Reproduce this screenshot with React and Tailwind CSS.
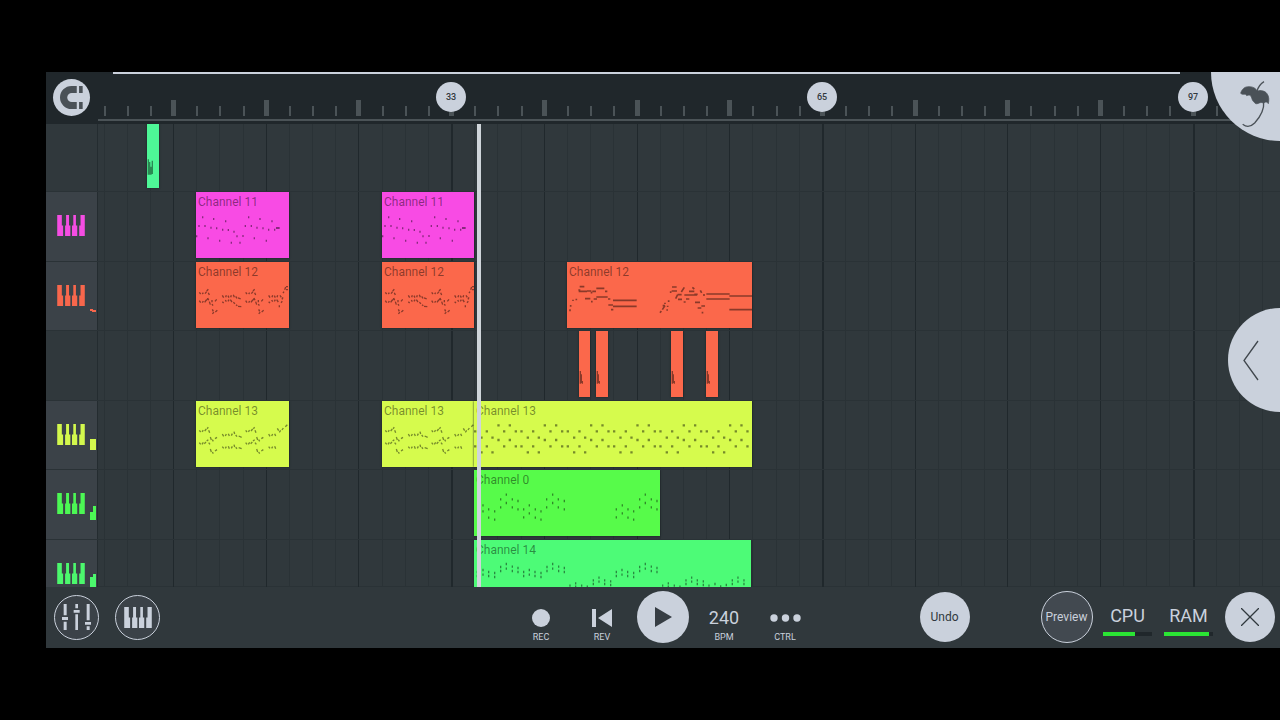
import { useState } from 'react';

// Horizontal scale of the playlist
const BAR_WIDTH = 11.586;
const SCROLL_X = 17.6;
const barX = (bar) => Math.round((bar - 1) * BAR_WIDTH - SCROLL_X);

const MARKERS = [33, 65, 97];
const GRID_BARS = Array.from({ length: 100 }, (_, i) => i * 2 + 3);

// Note previews are stored as stroke paths, three units to the pixel
const dots = (points, w = 4) => points.map(([x, y]) => `M${x} ${y}h${w}`).join('');

const repeat = (points, step, times) =>
    Array.from({ length: times }, (_, i) => points.map(([x, y]) => [x + i * step, y])).flat();

const SPARSE = dots([
    [18, 76], [51, 81], [87, 88], [7, 102], [25, 102], [43, 107], [60, 109], [78, 113], [95, 114], [112, 119],
    [121, 133], [139, 132], [34, 139], [69, 146], [104, 152], [130, 152], [156, 76], [190, 81], [226, 88],
    [146, 102], [164, 102], [181, 107], [199, 109], [216, 113], [234, 113], [173, 139], [209, 146], [0, 133],
]) + 'M240 108h11';

const PHRASE_12 =
    'M10 91l4 5M19 96l3-4M27 95l5-6M32 87l5-5M37 92l3 7M10 116l4 6M19 122l3-5M26 121l5-7M31 115l5-6M35 108l3 7M40 119l3 9M48 126l3 5M48 114v7M57 118l5-6M49 142l3 6M49 155l5-4M58 150l6-5' +
    'M79 100l4 7M89 106l2-6M96 101l3 6M104 106l2-6M79 119l4 4M88 114l3 5M96 118l3-5M103 113l5 7';
const TAIL_12 = 'M112 98l3 8M119 103l4 6M112 121l5 4M120 128l4 3M126 108l8 3M126 133l10 1';
const END_12 = 'M252 100l4 6M258 112l3-6M255 122l4-4M261 93l3-4M266 83l3-8M270 74h6M270 83h6M250 130v6';

const PHRASE_13 =
    'M10 88l4 5M18 92l4-4M26 90l5-6M33 83l4-4M38 88l3 7M10 125l4 5M18 130l4-6M25 128l5-5M32 120l5-4M38 125l4 5M43 108l3 9M49 116l3 5M57 113l6-4M43 144l3 9M49 153l3 5M57 150l6-4' +
    'M79 99l4 7M88 105l3-6M97 98l3 7M79 137l4 5M88 142l3-5M97 136l3 7';
const TAIL_13 = 'M106 104l3-6M114 92l2 7M119 102l4 5M128 105l9 4M106 142l3-6M114 131l2 7M119 139l4 4M128 140l9 3';
const END_13 = 'M244 82l4 7M250 94l4-6M258 87l4-6M268 77l6-6';

const CHORDS =
    'M9 142v6M11 129v5M18 113v4M28 110v5M34 84h6M38 74h14M35 88h25M54 110h16M60 87h13M71 92h5M76 88h11M72 119h5M80 111h10M88 79h24M88 105h34M114 88h7M123 111h7M124 129h14M132 143h7M138 133h71M138 115h71' +
    'M279 152l4-5M286 143l8-12M287 131h7M294 122v4M298 144h5M302 131v4M305 115v5M311 88v5M315 75h14M314 87h16M326 110l6-12M332 98h12M343 90l9-14M352 99h38M333 112h12M350 120h6M357 111h10M366 88h16M376 76l6 5M382 97h10M384 121h15M392 138h11M403 132h11M404 152h5M400 85l4 8M411 96v6M418 96h70M418 111h70M487 102h69M487 143h69';

const ARP = dots(
    repeat([
        [70, 73], [104, 73], [0, 91], [35, 91], [87, 91], [122, 91], [19, 110], [52, 110],
        [70, 117], [104, 117], [0, 136], [35, 136], [87, 136], [122, 136], [19, 154], [52, 154],
    ], 139, 6),
    7
);

const STEP_0 = dots([
    [25, 106], [25, 124], [42, 118], [42, 143], [60, 124], [60, 149], [78, 88], [78, 112], [95, 74], [95, 99],
    [113, 88], [113, 112], [130, 93], [130, 118], [147, 118], [147, 142], [164, 106], [164, 130], [182, 118], [182, 143],
    [199, 124], [199, 149], [216, 88], [216, 112], [234, 74], [234, 99], [251, 88], [251, 112], [269, 93], [269, 118],
    [425, 118], [425, 142], [443, 106], [443, 130], [460, 118], [460, 143], [477, 124], [477, 149], [495, 88], [495, 112],
    [512, 74], [512, 99], [530, 88], [530, 112], [547, 93], [547, 118],
], 4);

const HIGH_RUN = [
    [8, 96], [8, 108], [25, 90], [25, 104], [42, 96], [42, 108], [60, 99], [60, 111],
    [78, 81], [78, 93], [95, 72], [95, 86], [113, 80], [113, 93], [130, 84], [130, 96],
];
const LOW_RUN = [
    [286, 137], [303, 130], [303, 140], [321, 137], [338, 140], [356, 121], [356, 132],
    [373, 113], [373, 125], [390, 121], [390, 132], [408, 124], [408, 135],
];
const STEP_14 = dots([
    ...repeat(HIGH_RUN, 139, 2),
    ...HIGH_RUN.map(([x, y]) => [x + 417, y]),
    ...LOW_RUN,
    ...LOW_RUN.map(([x, y]) => [x + 278, y]),
    [703, 137], [721, 132], [738, 139], [755, 135], [773, 121], [773, 132], [790, 113], [790, 125], [808, 121], [808, 132],
], 4);

const HIT = 'M4 120v38M7 130v26M10 150v8';

const TRACKS = [
    {
        height: 'h-[67px]',
        clips: [{ start: 6.75, bars: 1, fill: 'bg-[#4ef797]', notes: 'M4 112v46M8 120v38M12 134v24M16 116v40', cut: true }],
    },
    {
        height: 'h-[70px]',
        color: 'text-[#f54de3]',
        clips: [
            { start: 11, bars: 8, name: 'Channel 11', fill: 'bg-[#f84be4]', notes: SPARSE, weight: 6 },
            { start: 27, bars: 8, name: 'Channel 11', fill: 'bg-[#f84be4]', notes: SPARSE, weight: 6 },
        ],
    },
    {
        height: 'h-[69px]',
        color: 'text-[#f8674c]',
        level: 'M0 47h3v1h3v2H2v-1H0z',
        clips: [
            { start: 11, bars: 8, name: 'Channel 12', fill: 'bg-[#fb684b]', phrase: PHRASE_12, notes: TAIL_12 + END_12 },
            { start: 27, bars: 8, name: 'Channel 12', fill: 'bg-[#fb684b]', phrase: PHRASE_12, notes: TAIL_12 + END_12 },
            { start: 43, bars: 16, name: 'Channel 12', fill: 'bg-[#fb684b]', notes: CHORDS, weight: 5 },
        ],
    },
    {
        height: 'h-[70px]',
        clips: [44, 45.5, 52, 55].map((start) => ({ start, bars: 1, fill: 'bg-[#fb684b]', notes: HIT })),
    },
    {
        height: 'h-[69px]',
        color: 'text-[#d3f84d]',
        level: 'M0 38h6v11H0z',
        clips: [
            { start: 11, bars: 8, name: 'Channel 13', fill: 'bg-[#d6fb4d]', phrase: PHRASE_13, notes: TAIL_13 + END_13 },
            { start: 27, bars: 8, name: 'Channel 13', fill: 'bg-[#d6fb4d]', phrase: PHRASE_13, notes: TAIL_13 + END_13 },
            { start: 35, bars: 24, name: 'Channel 13', fill: 'bg-[#d6fb4d]', notes: ARP, weight: 7 },
        ],
    },
    {
        height: 'h-[70px]',
        color: 'text-[#4cf854]',
        level: 'M3 36h3v14H0v-8h3z',
        clips: [{ start: 35, bars: 16, name: 'Channel 0', fill: 'bg-[#57fb4a]', notes: STEP_0, weight: 7 }],
    },
    {
        height: 'h-12',
        color: 'text-[#4cf86d]',
        level: 'M3 34h3v14H0V37h3z',
        clips: [{ start: 35, bars: 23.9, name: 'Channel 14', fill: 'bg-[#4dfb77]', notes: STEP_14, weight: 7 }],
    },
];

const PianoIcon = () => (
    <svg viewBox="0 0 84 64" className="block w-7 h-[21px]" fill="currentColor">
        <path d="M0 0h14v32h4v32H0zM27 0h9v32h4v32H24V32h3zM49 0h8v32h4v32H45V32h4zM71 0h13v64H67V32h4z" />
    </svg>
);

const MixerIcon = () => (
    <svg viewBox="0 0 87 78" className="block w-[29px] h-[26px]" fill="currentColor">
        <path d="M5 0h9v34H5zM0 39h18v9H0zM5 53h9v25H5zM40 0h8v13h-8zM35 18h18v8H35zM40 31h8v47h-8zM74 0h9v49h-9zM69 54h18v8H69zM74 67h9v11h-9z" />
    </svg>
);

const MagnetIcon = () => (
    <svg viewBox="0 0 70 70" className="block w-[23px] h-[23px]" fill="currentColor">
        <path d="M51 0H35a35 35 0 0 0 0 70h16V49H36a14 14 0 0 1 0-28h15zM58 0h11v21H58zM58 49h11v21H58z" />
    </svg>
);

const FruitIcon = () => (
    <svg viewBox="0 0 207 207" className="block size-full" fill="none" stroke="currentColor">
        <path
            fill="currentColor"
            strokeWidth="2"
            d="M89 64c3-12 12-21 25-20 12-1 21 6 25 13 9-4 24 0 29 8 7 9 6 20 4 30-3-5-8-6-13-3-3 3-7-2-11 0-6 1-13 7-17 0-7-5-8-11-10-17-2-6-9-7-14-4-2-1-1-5-5-4-3-1-8 2-13-3z"
        />
        <path strokeWidth="4" d="M137 60c4-15 12-25 22-31M158 90c2 20-9 43-27 63-10 10-23 14-36 4" />
    </svg>
);

const Clip = ({ clip }) => {
    const left = barX(clip.start);
    const width = barX(clip.start + clip.bars) - left;

    return (
        <div
            className={`absolute ${clip.cut ? 'bottom-[3px]' : 'top-0'} h-[66px] overflow-hidden shadow-[0_0_2px_#1a2024] ${clip.fill}`}
            style={{ left, width }}
        >
            <svg className="absolute inset-0 size-full" fill="none" stroke="#000" strokeOpacity="0.45" strokeWidth={clip.weight || 4}>
                <g transform="scale(0.3333)">
                    {clip.phrase && <path d={clip.phrase} />}
                    {clip.phrase && <path d={clip.phrase} transform="translate(139 0)" />}
                    <path d={clip.notes} />
                </g>
            </svg>
            {clip.name && (
                <p className="relative pl-0.5 pt-0.5 text-[12px] leading-4 text-black/45 whitespace-nowrap">
                    {clip.name}
                </p>
            )}
        </div>
    );
};

const Ruler = () => (
    <div className="relative flex-1 overflow-hidden">
        <svg className="absolute inset-0 size-full" fill="#4b5357">
            {GRID_BARS.map((bar) => {
                const beat = (bar - 1) % 8 === 0;
                return <rect key={bar} x={barX(bar) - (beat ? 2 : 0)} y={beat ? 28 : 34} width={beat ? 5 : 2} height={beat ? 16 : 10} />;
            })}
            <rect y="47" width="100%" height="2" />
        </svg>
        {MARKERS.map((bar) => (
            <span
                key={bar}
                className="absolute top-[10px] -translate-x-1/2 flex items-center justify-center size-[30px] rounded-full bg-[#cad1dc] text-[9px] leading-3 font-medium text-[#30383d]"
                style={{ left: barX(bar) }}
            >
                {bar}
            </span>
        ))}
    </div>
);

const Playlist = () => (
    <div className="relative overflow-hidden">
        {/* Bar lines behind the lanes */}
        <div className="absolute inset-y-0 left-13 right-0">
            <svg className="block size-full">
                {GRID_BARS.map((bar) => {
                    const strong = (bar - 1) % 32 === 0;
                    const beat = (bar - 1) % 8 === 0;
                    return (
                        <rect
                            key={bar}
                            x={barX(bar)}
                            width={strong ? 2 : 1}
                            height="100%"
                            fill={beat ? '#20282c' : '#2a3236'}
                        />
                    );
                })}
            </svg>
        </div>

        {TRACKS.map((track, i) => (
            <div key={i} className={`relative flex overflow-hidden ${track.height} ${i > 0 ? 'border-t border-[#2a3236]' : ''}`}>
                <div className={`w-13 shrink-0 border-r border-[#242c30] ${track.color ? 'bg-[#3b4248]' : ''}`}>
                    {track.color && (
                        <button type="button" aria-label={`Track ${i + 1}`} className={`flex pl-[11px] gap-[5px] ${track.color}`}>
                            <span className="pt-[23px]"><PianoIcon /></span>
                            <svg width="6" height="69" viewBox="0 0 6 69" fill="currentColor">
                                {track.level && <path d={track.level} />}
                            </svg>
                        </button>
                    )}
                </div>
                <div className="relative flex-1">
                    {track.clips.map((clip, n) => <Clip key={n} clip={clip} />)}
                </div>
            </div>
        ))}

        {/* Playhead */}
        <div className="absolute inset-y-0 left-13 right-0 pointer-events-none">
            <div className="absolute inset-y-0 w-1 bg-[#cfd5da]" style={{ left: barX(35.25) }} />
        </div>
    </div>
);

const Transport = ({ label, children, ...props }) => (
    <button type="button" className="flex flex-col items-center w-[61px] h-[61px] pt-5" {...props}>
        <span className="flex items-center justify-center h-[21px] text-[18px] leading-5">{children}</span>
        <span className="mt-[3px] text-[9px] leading-3">{label}</span>
    </button>
);

const Meter = ({ label, value }) => (
    <div className="flex flex-col items-center w-[61px] h-[61px] pt-[19px]">
        <span className="text-[18px] leading-5 mb-[6px]">{label}</span>
        <div role="meter" aria-label={label} aria-valuenow={value} className="w-[49px] h-1 bg-[#20272b]">
            <div className="h-full bg-[#2be534]" style={{ width: `${value}%` }} />
        </div>
    </div>
);

const Slot = ({ children }) => (
    <div className="flex items-center justify-center w-[61px] h-[60px]">{children}</div>
);

const App = () => {
    const [playing, setPlaying] = useState(false);

    return (
        <div className="flex flex-col justify-center min-h-screen bg-black pl-[46px] font-[Roboto,sans-serif]">
            <main className="relative overflow-hidden bg-[#30383c] text-[#cad1dc]">
                {/* Header */}
                <header className="relative flex h-13 bg-[#20272b]">
                    <div className="w-13 pt-[7px] pl-[7px] flex items-start">
                        <button type="button" aria-label="Snap" className="flex items-center justify-center size-[37px] rounded-full bg-[#cad1dc] text-[#4a5157]">
                            <MagnetIcon />
                        </button>
                    </div>
                    <Ruler />
                    <div className="absolute top-0 left-[67px] right-[100px] h-0.5 bg-[#cad1dc]" />
                </header>

                <Playlist />

                {/* Toolbar */}
                <footer className="grid grid-cols-[1fr_auto_1fr] border-t border-[#2a3236] -mt-px">
                    <div className="flex">
                        <Slot>
                            <button type="button" aria-label="Mixer" className="flex items-center justify-center size-[45px] rounded-full border border-[#cad1dc] bg-[#3b4248]">
                                <MixerIcon />
                            </button>
                        </Slot>
                        <Slot>
                            <button type="button" aria-label="Keyboard" className="flex items-center justify-center size-[45px] rounded-full border border-[#cad1dc] bg-[#3b4248]">
                                <PianoIcon />
                            </button>
                        </Slot>
                    </div>

                    <div className="flex">
                        <Transport label="REC"><span className="size-[18px] rounded-full bg-current" /></Transport>
                        <Transport label="REV">
                            <svg width="20" height="18" viewBox="0 0 20 18" fill="currentColor">
                                <path d="M0 0h4v18H0zM20 0v18L6 9z" />
                            </svg>
                        </Transport>
                        <Slot>
                            <button
                                type="button"
                                aria-label="Play"
                                aria-pressed={playing}
                                onClick={() => setPlaying(!playing)}
                                className="flex items-center justify-center size-[52px] rounded-full bg-[#cad1dc] text-[#363d43]"
                            >
                                <svg width="17" height="20" viewBox="0 0 17 20" fill="currentColor">
                                    <path d="M0 0l17 10L0 20z" />
                                </svg>
                            </button>
                        </Slot>
                        <Transport label="BPM">240</Transport>
                        <Transport label="CTRL">
                            <svg width="31" height="8" viewBox="0 0 31 8" fill="currentColor">
                                <circle cx="4" cy="4" r="3.7" />
                                <circle cx="15.5" cy="4" r="3.7" />
                                <circle cx="27" cy="4" r="3.7" />
                            </svg>
                        </Transport>
                    </div>

                    <div className="flex justify-end">
                        <Slot>
                            <button type="button" className="size-[50px] rounded-full bg-[#cad1dc] text-[12px] text-[#30383d]">Undo</button>
                        </Slot>
                        <Slot />
                        <Slot>
                            <button type="button" className="size-[52px] rounded-full border border-[#cad1dc] bg-[#424950] text-[12px]">Preview</button>
                        </Slot>
                        <Meter label="CPU" value={66} />
                        <Meter label="RAM" value={91} />
                        <Slot>
                            <button type="button" aria-label="Close" className="flex items-center justify-center size-[50px] rounded-full bg-[#cad1dc] text-[#30383d]">
                                <svg width="18" height="18" viewBox="0 0 18 18" stroke="currentColor" strokeWidth="1.3">
                                    <path d="M0 0l18 18M18 0L0 18" />
                                </svg>
                            </button>
                        </Slot>
                    </div>
                </footer>

                {/* Corner and side handles */}
                <button type="button" aria-label="Menu" className="absolute top-0 right-0 size-[69px] rounded-bl-full bg-[#cad1dc] text-[#4a5157]">
                    <FruitIcon />
                </button>
                <button type="button" aria-label="Open panel" className="absolute top-1/2 right-0 -translate-y-1/2 flex items-center w-13 h-26 pl-[15px] rounded-l-full bg-[#cad1dc] text-[#40474d]">
                    <svg width="16" height="41" viewBox="0 0 16 41" fill="none" stroke="currentColor" strokeWidth="1.3">
                        <path d="M15 1L1 20.500L15 40" />
                    </svg>
                </button>
            </main>
        </div>
    );
};

export default App;
